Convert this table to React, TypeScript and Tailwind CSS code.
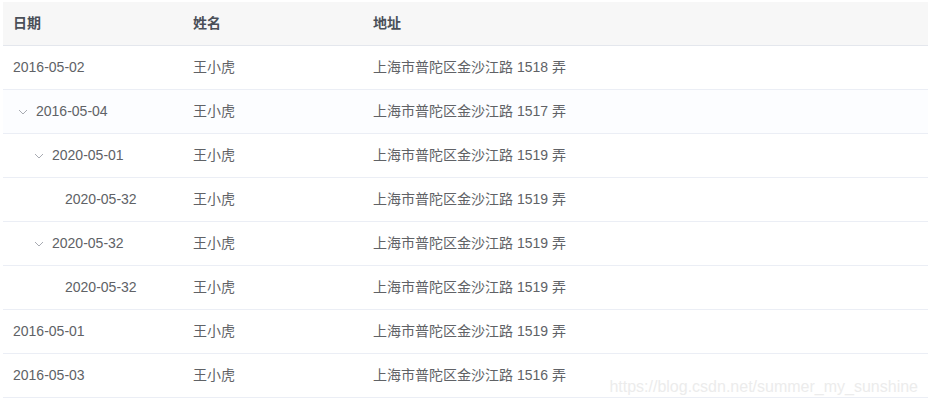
import React from 'react'

type Row = {
  date: string
  name: string
  address: string
  level: number
  hasChildren?: boolean
}

const rows: Row[] = [
  { date: '2016-05-02', name: '王小虎', address: '上海市普陀区金沙江路 1518 弄', level: 0 },
  { date: '2016-05-04', name: '王小虎', address: '上海市普陀区金沙江路 1517 弄', level: 0, hasChildren: true },
  { date: '2020-05-01', name: '王小虎', address: '上海市普陀区金沙江路 1519 弄', level: 1, hasChildren: true },
  { date: '2020-05-32', name: '王小虎', address: '上海市普陀区金沙江路 1519 弄', level: 2 },
  { date: '2020-05-32', name: '王小虎', address: '上海市普陀区金沙江路 1519 弄', level: 1, hasChildren: true },
  { date: '2020-05-32', name: '王小虎', address: '上海市普陀区金沙江路 1519 弄', level: 2 },
  { date: '2016-05-01', name: '王小虎', address: '上海市普陀区金沙江路 1519 弄', level: 0 },
  { date: '2016-05-03', name: '王小虎', address: '上海市普陀区金沙江路 1516 弄', level: 0 },
]

const Chevron = () => (
  <svg width="20" height="12" viewBox="0 0 20 12" className="shrink-0 mr-[3px]">
    <path d="M6 4l4 4 4-4" fill="none" stroke="#a8abb2" strokeWidth="1" />
  </svg>
)

export default function App() {
  return (
    <div className="relative w-[929px] h-[403px] bg-white pt-[2px] pl-[3px] font-['Liberation_Sans','Noto_Sans_CJK_SC',sans-serif] text-[14px]">
      <div className="w-[925px]">
        <div className="grid grid-cols-[180px_180px_1fr] h-[44px] bg-[#f7f7f7] border-b border-[#e4e7ed] items-center text-[#4a4f58] font-bold">
          <div className="pl-[10px]">日期</div>
          <div className="pl-[10px]">姓名</div>
          <div className="pl-[10px]">地址</div>
        </div>

        {rows.map((r, i) => (
          <div
            key={i}
            className={`grid grid-cols-[180px_180px_1fr] h-[44px] border-b border-[#ebeef5] items-center text-[#606266] ${i === 1 ? 'bg-[#fcfdff]' : 'bg-white'}`}
          >
            <div className="pl-[10px] flex items-center">
              {r.level > 0 && <span className="shrink-0" style={{ width: r.level * 16 }} />}
              {r.hasChildren ? <Chevron /> : r.level > 0 ? <span className="w-[20px] shrink-0" /> : null}
              <span>{r.date}</span>
            </div>
            <div className="pl-[10px]">{r.name}</div>
            <div className="pl-[10px]">{r.address}</div>
          </div>
        ))}
      </div>

      <div className="absolute right-[11px] top-[375px] text-[16px] text-[#ececec] font-['Liberation_Sans',sans-serif]">
        https://blog.csdn.net/summer_my_sunshine
      </div>
    </div>
  )
}
